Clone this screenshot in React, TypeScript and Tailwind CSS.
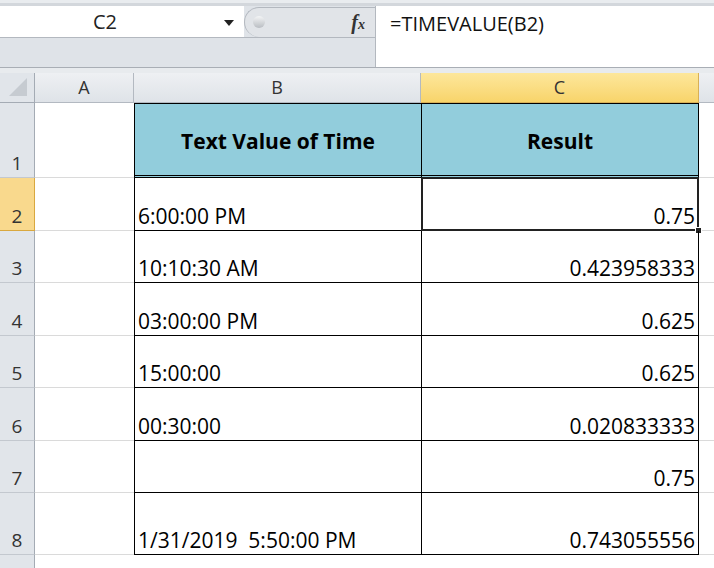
import React from "react";

interface RowData {
  n: number;
  h: string;
  b: string;
  c: string;
}

const rows: RowData[] = [
  { n: 2, h: "h-[53px]", b: "6:00:00 PM", c: "0.75" },
  { n: 3, h: "h-[52px]", b: "10:10:30 AM", c: "0.423958333" },
  { n: 4, h: "h-[53px]", b: "03:00:00 PM", c: "0.625" },
  { n: 5, h: "h-[52px]", b: "15:00:00", c: "0.625" },
  { n: 6, h: "h-[53px]", b: "00:30:00", c: "0.020833333" },
  { n: 7, h: "h-[52px]", b: "", c: "0.75" },
  { n: 8, h: "h-[62px]", b: "1/31/2019  5:50:00 PM", c: "0.743055556" },
];

const FormulaBar: React.FC = () => {
  return (
    <div className="h-[73px] bg-[#dfe3e8] flex flex-col">
      <div className="h-[6px] border-t-[3px] border-[#e9ecef] bg-[#d3d7dc]" />
      <div className="flex h-[61px]">
        <div className="w-[376px] flex flex-col border-r border-[#b3b8bf]">
          <div className="h-[31px] flex">
            <div className="w-[244px] bg-white flex items-center">
              <span className="w-[210px] text-center text-[20px] text-[#222]">C2</span>
              <svg width="10" height="6" viewBox="0 0 10 6" className="ml-[14px] mt-[2px]">
                <path d="M0 0 L10 0 L5 6 Z" fill="#222" />
              </svg>
            </div>
            <div className="flex-1 flex items-center">
              <div className="h-[30px] flex-1 rounded-l-full border-l border-t border-[#b3b8bf] bg-[#e1e4e8] flex items-center pl-[8px]">
                <div className="w-[12px] h-[12px] rounded-full bg-gradient-to-b from-[#f4f5f6] to-[#b9bdc2]" />
                <span className="ml-auto mr-[10px] font-['Liberation_Serif',serif] italic font-bold text-[20px] text-[#333] leading-none">
                  f<span className="text-[14px]">x</span>
                </span>
              </div>
            </div>
          </div>
          <div className="flex-1 border-t border-[#b3b8bf]" />
        </div>
        <div className="flex-1 bg-white pl-[14px] pt-[4px] text-[20px] leading-[28px] text-[#111]">
          =TIMEVALUE(B2)
        </div>
      </div>
      <div className="flex-1 border-t border-[#a9aeb5] bg-[#e8ebee]" />
    </div>
  );
};

const App: React.FC = () => {
  const gridCols = "grid grid-cols-[35px_99px_287px_278px_1fr]";
  const rowHead =
    "bg-[#e1e5ea] border-r border-r-[#a4abb4] border-b border-b-[#c3c8cf] text-[19px] text-[#333] flex items-end justify-center pb-[2px] leading-[24px]";
  const gridA = "bg-white border-b border-[#dadada]";
  const gridD = "bg-white border-b border-[#dadada]";

  return (
    <div className="w-[714px] h-[568px] overflow-hidden bg-white font-['Open_Sans','Liberation_Sans',sans-serif]">
      <FormulaBar />

      {/* column headers */}
      <div className={`${gridCols} h-[30px]`}>
        <div className="bg-[#e1e5ea] border-r border-b border-[#a4abb4] relative">
          <svg width="18" height="18" viewBox="0 0 18 18" className="absolute left-[9px] top-[5px]">
            <path d="M18 0 L18 18 L0 18 Z" fill="#c6cbd1" />
          </svg>
        </div>
        <div className="bg-gradient-to-b from-[#eef0f3] to-[#dfe3e8] border-r border-b border-[#b3b9c1] flex items-center justify-center text-[18px] text-[#333]">
          A
        </div>
        <div className="bg-gradient-to-b from-[#eef0f3] to-[#dfe3e8] border-r border-b border-[#b3b9c1] flex items-center justify-center text-[18px] text-[#333]">
          B
        </div>
        <div className="bg-gradient-to-b from-[#fde79b] to-[#f8d46a] border-r border-b border-[#d8b056] flex items-center justify-center text-[18px] text-[#333]">
          C
        </div>
        <div className="bg-gradient-to-b from-[#eef0f3] to-[#dfe3e8] border-b border-[#b3b9c1]" />
      </div>

      {/* row 1 */}
      <div className={`${gridCols} h-[75px]`}>
        <div className={rowHead}>1</div>
        <div className={gridA} />
        <div className="bg-[#92cddc] border-l border-t border-black border-b-[3px] border-b-black border-double flex items-center justify-center pt-[3px] font-bold text-[21px] text-black leading-[24px]">
          Text Value of Time
        </div>
        <div className="bg-[#92cddc] border-l border-r border-t border-black border-b-[3px] border-b-black border-double flex items-center justify-center pt-[3px] font-bold text-[21px] text-black leading-[24px]">
          Result
        </div>
        <div className={gridD} />
      </div>

      {rows.map((r) => (
        <div key={r.n} className={`${gridCols} ${r.h}`}>
          <div
            className={
              r.n === 2
                ? "bg-[#f9d98d] border-r border-r-[#d9a83f] border-b border-b-[#d9a83f] text-[19px] text-[#333] flex items-end justify-center pb-[2px] leading-[24px]"
                : rowHead
            }
          >
            {r.n}
          </div>
          <div className={gridA} />
          <div className="border-l border-b border-black flex items-end pl-[3px] pb-[2px] text-[21px] leading-[24px] text-black whitespace-pre">
            {r.b}
          </div>
          <div className="relative border-l border-r border-b border-black flex items-end justify-end pr-[3px] pb-[2px] text-[21px] leading-[24px] text-black">
            {r.c}
            {r.n === 2 && (
              <>
                <div className="absolute -left-[1px] -top-[1px] -right-[1px] -bottom-[1px] border-2 border-[#222]" />
                <div className="absolute -right-[4px] -bottom-[4px] w-[7px] h-[7px] bg-[#222] border border-white" />
              </>
            )}
          </div>
          <div className={gridD} />
        </div>
      ))}

      {/* row 9 (partial) */}
      <div className={`${gridCols} h-[30px]`}>
        <div className="bg-[#e1e5ea] border-r border-[#a4abb4]" />
        <div className="bg-white" />
        <div className="bg-white" />
        <div className="bg-white" />
        <div className="bg-white" />
      </div>
    </div>
  );
};

export default App;
